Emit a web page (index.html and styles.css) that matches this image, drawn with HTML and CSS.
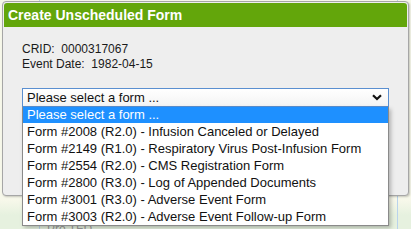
FILE: index.html
```html
<!DOCTYPE html>
<html lang="en">
<head>
    <meta charset="UTF-8">
    <title>Create Unscheduled Form</title>
    <link rel="stylesheet" href="styles.css">
</head>
<body>
    <div class="backdrop">
        <div class="grid-line line-left"></div>
        <div class="grid-line line-right"></div>
        <div class="back-label">Pro TFD</div>
    </div>

    <div class="dialog">
        <div class="titlebar">Create Unscheduled Form</div>
        <div class="dialog-body">
            <div class="info">
                <div>CRID:&nbsp; 0000317067</div>
                <div>Event Date:&nbsp; 1982-04-15</div>
            </div>
            <div class="select-wrap">
                <div class="fake-select">
                    <span>Please select a form ...</span>
                    <svg class="chevron" width="10" height="7" viewBox="0 0 10 7">
                        <path d="M1 1.2 L5 5 L9 1.2" fill="none" stroke="#111" stroke-width="2.2"/>
                    </svg>
                </div>
                <ul class="options">
                    <li class="selected">Please select a form ...</li>
                    <li>Form #2008 (R2.0) - Infusion Canceled or Delayed</li>
                    <li>Form #2149 (R1.0) - Respiratory Virus Post-Infusion Form</li>
                    <li>Form #2554 (R2.0) - CMS Registration Form</li>
                    <li>Form #2800 (R3.0) - Log of Appended Documents</li>
                    <li>Form #3001 (R3.0) - Adverse Event Form</li>
                    <li>Form #3003 (R2.0) - Adverse Event Follow-up Form</li>
                </ul>
            </div>
        </div>
    </div>
</body>
</html>
```

FILE: styles.css
```css
body {
    margin: 0;
    width: 411px;
    height: 229px;
    overflow: hidden;
    font-family: "Liberation Sans", Arial, sans-serif;
    position: relative;
    background: #fafbee;
}
.backdrop {
    position: absolute;
    inset: 0;
    background: linear-gradient(#f7f8ea 0, #f7f8ea 200px, #e6f1df 215px, #e6f1df 100%);
}
.grid-line {
    position: absolute;
    top: 0;
    bottom: 0;
    width: 1px;
    background: #b9d3ec;
}
.line-left { left: 39px; }
.line-right { left: 397px; }
.back-label {
    position: absolute;
    left: 47px;
    top: 222px;
    font-size: 12px;
    line-height: 14px;
    color: #9a9a9a;
}
.dialog {
    position: absolute;
    left: 2px;
    top: 1px;
    width: 405px;
    height: 193px;
    border: 1px solid #a6a6a6;
    border-radius: 4px;
    background: #eeeeee;
    box-shadow: 1px 1px 2px rgba(0, 0, 0, 0.2);
}
.titlebar {
    background: #63a60b;
    color: #fff;
    font-weight: bold;
    font-size: 14px;
    height: 24px;
    line-height: 24px;
    padding-left: 4px;
    border-radius: 3px 3px 0 0;
    margin: 1px 1px 0 1px;
}
.dialog-body {
    padding: 15px 0 0 19px;
}
.info {
    font-size: 12px;
    line-height: 15px;
    color: #1a1a1a;
}
.select-wrap {
    position: relative;
    margin-top: 16px;
    width: 367px;
}
.fake-select {
    box-sizing: border-box;
    height: 19px;
    border: 1px solid #5a8fd0;
    background: linear-gradient(#ffffff, #f4f4f4);
    font-size: 13px;
    line-height: 17px;
    padding-left: 4px;
    color: #111;
    display: flex;
    justify-content: space-between;
    align-items: center;
}
.chevron {
    margin-right: 6px;
}
.options {
    position: absolute;
    left: 0;
    top: 19px;
    width: 367px;
    box-sizing: border-box;
    margin: 0;
    padding: 0;
    list-style: none;
    background: #fff;
    border: 1px solid #8a8a8a;
    border-top: none;
    box-shadow: 2px 2px 4px rgba(0, 0, 0, 0.25);
    font-size: 13px;
    color: #111;
    z-index: 2;
}
.options li {
    height: 17px;
    line-height: 17px;
    padding-left: 4px;
    white-space: nowrap;
}
.options li.selected {
    height: 16px;
    line-height: 15px;
    background: #1e90ff;
    color: #fff;
}
```
